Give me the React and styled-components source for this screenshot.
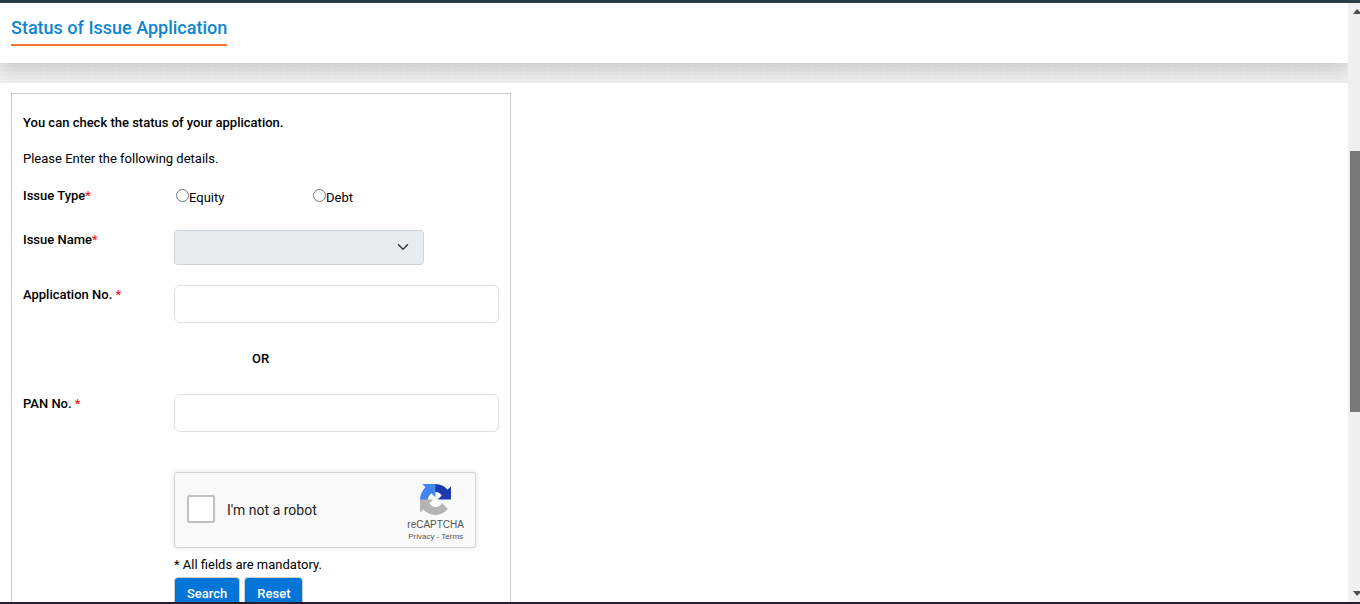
import React from 'react';
import styled, { createGlobalStyle } from 'styled-components';


const GlobalStyle = createGlobalStyle`
  *, *::before, *::after {
    box-sizing: border-box;
  }

  body {
    margin: 0;
    font-family: Roboto, 'Liberation Sans', sans-serif;
    font-size: 13px;
    line-height: 20px;
    color: #000;
    background-color: #fff;
  }
`;

const Page = styled.div`
  display: flex;
  height: 100vh;
  overflow: hidden;
  border-top: 3px solid #2a3f45;
  border-bottom: 2px solid #241c33;
`;

const Content = styled.main`
  flex: 1;
  min-width: 0;
  overflow: hidden;
`;

const TitleBar = styled.header`
  position: relative;
  padding: 13px 11px 17px;
  background-color: #fff;
  box-shadow: 0 8px 16px rgba(0, 0, 0, 0.15);
`;

const Title = styled.h1`
  display: inline-block;
  margin: 0;
  padding-bottom: 4px;
  border-bottom: 2px solid #f27539;
  font-size: 18px;
  font-weight: 500;
  line-height: 24px;
  vertical-align: top;
  color: #0d86d0;
`;

const Body = styled.section`
  position: relative;
  margin-top: 20px;
  padding: 10px 11px;
  background-color: #fff;
`;

const Band = styled.div`
  background-color: #ededed;
  background-image:
    repeating-linear-gradient(90deg, rgba(255, 255, 255, 0.2) 0 1px, transparent 1px 3px),
    repeating-linear-gradient(0deg, rgba(255, 255, 255, 0.2) 0 1px, transparent 1px 4px);
`;

const Panel = styled.form`
  max-width: 500px;
  padding: 19px 11px 24px;
  border: 1px solid #ccc;
`;

const Heading = styled.h2`
  margin: 0 0 16px;
  font-size: 13px;
  font-weight: 500;
  line-height: 20px;
`;

const Text = styled.p`
  margin: 0;
`;

const Row = styled.div`
  display: grid;
  grid-template-columns: 151px 1fr;
  align-items: start;
  margin-top: ${props => props.$gap || 20}px;
`;

const Label = styled.label`
  font-weight: 500;
`;

const Required = styled.span`
  font-weight: 400;
  color: #f00;
`;

const Radios = styled.div`
  display: grid;
  grid-template-columns: 137px 1fr;
  padding: 2px;
`;

const RadioLabel = styled.label`
  display: flex;
  align-items: flex-start;
`;

const Radio = styled.input`
  width: 13px;
  height: 13px;
  margin: 1px 0 0;
`;

const SelectBox = styled.div`
  position: relative;
  width: 250px;

  svg {
    position: absolute;
    top: 11px;
    right: 15px;
    pointer-events: none;
  }
`;

const Select = styled.select`
  display: block;
  width: 100%;
  height: 35px;
  border: 1px solid #ced4da;
  border-radius: 4px;
  background-color: #e9ecef;
  appearance: none;
  opacity: 1;
`;

const Input = styled.input`
  width: 100%;
  height: 38px;
  padding: 6px 12px;
  border: 1px solid #dee2e6;
  border-radius: 6px;
  background-color: #fff;
  font: inherit;
`;

const Or = styled.p`
  margin: 26px 0 0;
  padding-left: 229px;
  font-weight: 500;
`;

const Captcha = styled.div`
  display: flex;
  align-items: center;
  width: 302px;
  height: 76px;
  padding: 0 11px 0 12px;
  border: 1px solid #d3d3d3;
  border-radius: 3px;
  background-color: #f9f9f9;
  box-shadow: 0 0 4px 1px rgba(0, 0, 0, 0.08);
`;

const Tick = styled.input`
  width: 28px;
  height: 28px;
  margin: 0 12px 2px 0;
  border: 2px solid #c1c1c1;
  border-radius: 2px;
  background-color: #fff;
  appearance: none;
`;

const RobotLabel = styled.label`
  flex: 1;
  font-size: 14px;
  color: #222;
`;

const Brand = styled.div`
  display: flex;
  flex-direction: column;
  align-items: center;
  padding-top: 6px;
  font-family: 'Liberation Sans', Arial, sans-serif;
  font-size: 10px;
  line-height: 12px;
  color: #555;

  svg {
    margin-bottom: 4px;
  }
`;

const Policy = styled.div`
  font-size: 8px;

  a {
    color: inherit;
    text-decoration: none;
  }
`;

const Note = styled.p`
  margin: 7px 0 2px;
`;

const Buttons = styled.div`
  display: flex;
  gap: 4px;
`;

const Button = styled.button`
  height: 33px;
  padding: 0 12px;
  border: 1px solid #ccc;
  border-radius: 4px;
  font: inherit;
  font-weight: 500;
  color: #fff;
  background-color: #0275d8;
`;

const Scrollbar = styled.div`
  display: flex;
  flex-direction: column;
  width: 12px;
  padding-left: 2px;
  overflow: hidden;
  background-color: #f0f0f0;

  svg {
    flex: none;
    margin-left: 3px;
  }
`;

const Track = styled.div`
  flex: ${props => props.$size} 0 0;
`;

const Thumb = styled(Track)`
  background-color: #787878;
`;

const Logo = () => (
  <svg width="31" height="31" viewBox="0 0 64 64" aria-hidden="true">
    <path fill="#1c3aa9" d="M64 31.955l-.033-1.37V4.687l-7.16 7.16C50.948 4.674 42.033.093 32.05.093c-10.4 0-19.622 4.96-25.458 12.64l11.736 11.86a15.55 15.55 0 0 1 4.754-5.334c2.05-1.6 4.952-2.906 8.968-2.906.485 0 .86.057 1.135.163 4.976.393 9.288 3.14 11.828 7.124l-8.307 8.307L64 31.953" />
    <path fill="#4285f4" d="M31.862.094l-1.37.033H4.594l7.16 7.16C4.58 13.147 0 22.06 0 32.046c0 10.4 4.96 19.622 12.64 25.458L24.5 45.768a15.55 15.55 0 0 1-5.334-4.754c-1.6-2.05-2.906-4.952-2.906-8.968 0-.485.057-.86.163-1.135.393-4.976 3.14-9.288 7.124-11.828l8.307 8.307L31.86.095" />
    <path fill="#b4b4b4" d="M.001 32.045l.033 1.37v25.898l7.16-7.16c5.86 7.173 14.774 11.754 24.76 11.754 10.4 0 19.622-4.96 25.458-12.64l-11.736-11.86a15.55 15.55 0 0 1-4.754 5.334c-2.05 1.6-4.952 2.906-8.968 2.906-.485 0-.86-.057-1.135-.163-4.976-.393-9.288-3.14-11.828-7.124l8.307-8.307c-10.522.04-22.4.066-27.295-.005" />
  </svg>
);

const App = () => {
  return (
    <>
      <GlobalStyle />
      <Page>
        <Content>
          <Band>
            <TitleBar>
              <Title>Status of Issue Application</Title>
            </TitleBar>
            <Body>
              <Panel onSubmit={e => e.preventDefault()}>
                <Heading>You can check the status of your application.</Heading>
                <Text>Please Enter the following details.</Text>
                <Row $gap={17} role="radiogroup" aria-labelledby="issue-type">
                  <Label as="span" id="issue-type">Issue Type<Required>*</Required></Label>
                  <Radios>
                    <RadioLabel><Radio type="radio" name="type" value="equity" />Equity</RadioLabel>
                    <RadioLabel><Radio type="radio" name="type" value="debt" />Debt</RadioLabel>
                  </Radios>
                </Row>
                <Row>
                  <Label htmlFor="issue-name">Issue Name<Required>*</Required></Label>
                  <SelectBox>
                    <Select id="issue-name" disabled />
                    <svg width="12" height="12" viewBox="0 0 16 16" fill="none" stroke="#343a40" strokeWidth="2" strokeLinecap="round" strokeLinejoin="round">
                      <path d="M2 5l6 6 6-6" />
                    </svg>
                  </SelectBox>
                </Row>
                <Row>
                  <Label htmlFor="application-no">Application No. <Required>*</Required></Label>
                  <Input id="application-no" type="text" />
                </Row>
                <Or>OR</Or>
                <Row $gap={25}>
                  <Label htmlFor="pan-no">PAN No. <Required>*</Required></Label>
                  <Input id="pan-no" type="text" />
                </Row>
                <Row $gap={40}>
                  <span />
                  <div>
                    <Captcha>
                      <Tick id="robot" type="checkbox" />
                      <RobotLabel htmlFor="robot">I'm not a robot</RobotLabel>
                      <Brand>
                        <Logo />
                        reCAPTCHA
                        <Policy><a href="#privacy">Privacy</a> - <a href="#terms">Terms</a></Policy>
                      </Brand>
                    </Captcha>
                    <Note>* All fields are mandatory.</Note>
                    <Buttons>
                      <Button type="submit">Search</Button>
                      <Button type="reset">Reset</Button>
                    </Buttons>
                  </div>
                </Row>
              </Panel>
            </Body>
          </Band>
        </Content>
        <Scrollbar aria-hidden="true">
          <svg width="9" height="17"><path d="M0 11h9L4 6z" fill="#505050" /></svg>
          <Track $size={131} />
          <Thumb $size={261} />
          <Track $size={173} />
          <svg width="9" height="17"><path d="M0 6h9L4 11z" fill="#505050" /></svg>
        </Scrollbar>
      </Page>
    </>
  )
}

export default App;
